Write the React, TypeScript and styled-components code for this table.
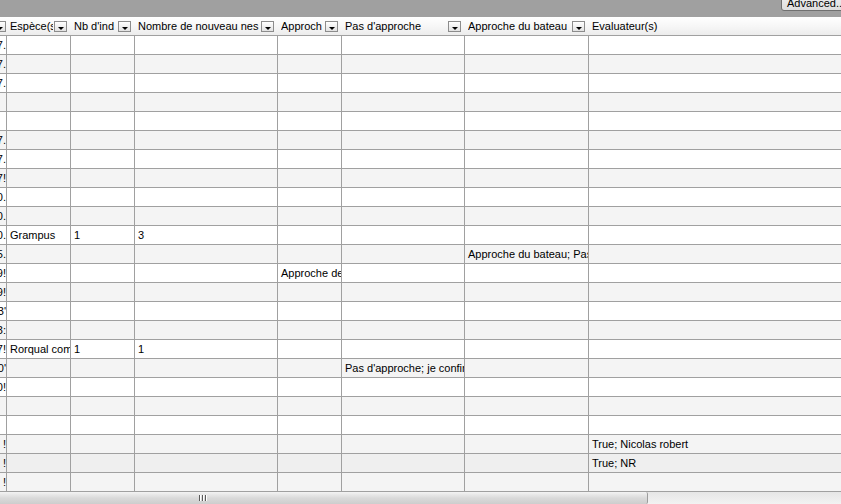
import styled, { createGlobalStyle } from 'styled-components';

type Tone = 'white' | 'gray' | 'hover';

interface GridRow {
  lead: string;
  cells: string[];
  tone: Tone;
}

const COLS = '7px 64px 64px 143px 64px 123px 124px 1fr';

const headers = [
  'Espèce(s)',
  "Nb d'ind",
  'Nombre de nouveau nes',
  'Approch',
  "Pas d'approche",
  'Approche du bateau',
  'Evaluateur(s)',
];

const leads = [
  '7.', '7.', '7.', '', '', '7.', '7.', '7!', '0.', '0.', '0.', '5.',
  '9!', '9!', "3'", '3:', '7!', "0'", '0!', '', '', '!', '!', '!',
];

const filled: Record<number, string[]> = {
  10: ['Grampus', '1', '3', '', '', '', ''],
  11: ['', '', '', '', '', "Approche du bateau; Pas d'approche", ''],
  12: ['', '', '', "Approche de l'animal", '', '', ''],
  16: ['Rorqual commun', '1', '1', '', '', '', ''],
  17: ['', '', '', '', "Pas d'approche; je confirme", '', ''],
  21: ['', '', '', '', '', '', 'True; Nicolas robert'],
  22: ['', '', '', '', '', '', 'True; NR'],
};

const rows: GridRow[] = leads.map((lead, i) => ({
  lead,
  cells: filled[i] ?? ['', '', '', '', '', '', ''],
  tone: i === 22 ? 'hover' : i >= 21 || i % 2 === 1 ? 'gray' : 'white',
}));

const GlobalStyle = createGlobalStyle`
  html, body {
    margin: 0;
    padding: 0;
    background: #ffffff;
  }
  body {
    font-family: "Liberation Sans", Arial, sans-serif;
    font-size: 11px;
    color: #000;
  }
`;

const Screen = styled.div`
  width: 841px;
  height: 504px;
  overflow: hidden;
  display: flex;
  flex-direction: column;
  background: #ffffff;
`;

const TopBar = styled.div`
  height: 17px;
  flex: none;
  background: #a0a0a0;
  display: flex;
  justify-content: flex-end;
  align-items: flex-start;
  overflow: hidden;
`;

const AdvancedButton = styled.button`
  margin-top: -10px;
  margin-right: -12px;
  width: 72px;
  height: 21px;
  padding: 5px 0 0 5px;
  text-align: left;
  border: 1px solid #707070;
  border-radius: 3px;
  background: linear-gradient(#f4f4f4, #dedede);
  font: 11px "Liberation Sans", Arial, sans-serif;
  color: #000;
  white-space: nowrap;
`;

const HeaderRow = styled.div`
  display: grid;
  grid-template-columns: ${COLS};
  height: 19px;
  flex: none;
  box-sizing: border-box;
  background: linear-gradient(#ffffff, #f6f6f6 55%, #ececec);
  border-bottom: 1px solid #a0a0a0;
`;

const HeaderCell = styled.div<{ $lead?: boolean }>`
  display: flex;
  align-items: center;
  gap: 1px;
  min-width: 0;
  overflow: hidden;
  padding: ${p => (p.$lead ? '0 1px 0 0' : '0 4px 0 3px')};
  justify-content: ${p => (p.$lead ? 'flex-end' : 'flex-start')};
`;

const HeaderLabel = styled.span`
  flex: 1;
  min-width: 0;
  overflow: hidden;
  white-space: nowrap;
`;

const DropButton = styled.span`
  flex: none;
  width: 13px;
  height: 11px;
  box-sizing: border-box;
  border: 1px solid #8c8c8c;
  background: linear-gradient(#ffffff, #e2e2e2);
  display: flex;
  align-items: flex-end;
  justify-content: center;
  padding-bottom: 1px;
`;

const Arrow = styled.span`
  width: 0;
  height: 0;
  border-left: 3px solid transparent;
  border-right: 3px solid transparent;
  border-top: 3px solid #000;
`;

const Body = styled.div`
  flex: 1;
  overflow: hidden;
`;

const toneColor: Record<Tone, string> = {
  white: '#ffffff',
  gray: '#f4f4f4',
  hover: '#efefef',
};

const Row = styled.div<{ $tone: Tone }>`
  display: grid;
  grid-template-columns: ${COLS};
  height: 19px;
  box-sizing: border-box;
  border-bottom: 1px solid #a0a0a0;
  background: ${p => toneColor[p.$tone]};
`;

const Cell = styled.div`
  min-width: 0;
  overflow: hidden;
  white-space: nowrap;
  line-height: 18px;
  padding-left: 3px;
  border-right: 1px solid #a0a0a0;
  &:last-child {
    border-right: none;
  }
`;

const LeadCell = styled.div`
  display: flex;
  justify-content: flex-end;
  overflow: hidden;
  white-space: nowrap;
  line-height: 18px;
  border-right: 1px solid #a0a0a0;
`;

const Scrollbar = styled.div`
  height: 12px;
  flex: none;
  display: flex;
  background: linear-gradient(#e6e6e6, #f2f2f2);
`;

const Thumb = styled.div`
  width: 648px;
  box-sizing: border-box;
  border-right: 1px solid #9c9c9c;
  border-radius: 0 2px 2px 0;
  background: linear-gradient(#f3f3f3, #dadada 50%, #cdcdcd);
  display: flex;
  align-items: center;
  padding-left: 199px;
`;

const Grip = styled.span`
  display: flex;
  gap: 1px;
  span {
    width: 2px;
    height: 6px;
    background: linear-gradient(90deg, #5a5a5a 50%, #ffffff 50%);
  }
`;

export default function App() {
  return (
    <Screen>
      <GlobalStyle />
      <TopBar>
        <AdvancedButton>Advanced...</AdvancedButton>
      </TopBar>
      <HeaderRow>
        <HeaderCell $lead>
          <DropButton>
            <Arrow />
          </DropButton>
        </HeaderCell>
        {headers.map((title, i) => (
          <HeaderCell key={title}>
            <HeaderLabel>{title}</HeaderLabel>
            {i < headers.length - 1 && (
              <DropButton>
                <Arrow />
              </DropButton>
            )}
          </HeaderCell>
        ))}
      </HeaderRow>
      <Body>
        {rows.map((row, r) => (
          <Row key={r} $tone={row.tone}>
            <LeadCell>{row.lead}</LeadCell>
            {row.cells.map((value, c) => (
              <Cell key={c}>{value}</Cell>
            ))}
          </Row>
        ))}
      </Body>
      <Scrollbar>
        <Thumb>
          <Grip>
            <span />
            <span />
            <span />
          </Grip>
        </Thumb>
      </Scrollbar>
    </Screen>
  );
}
